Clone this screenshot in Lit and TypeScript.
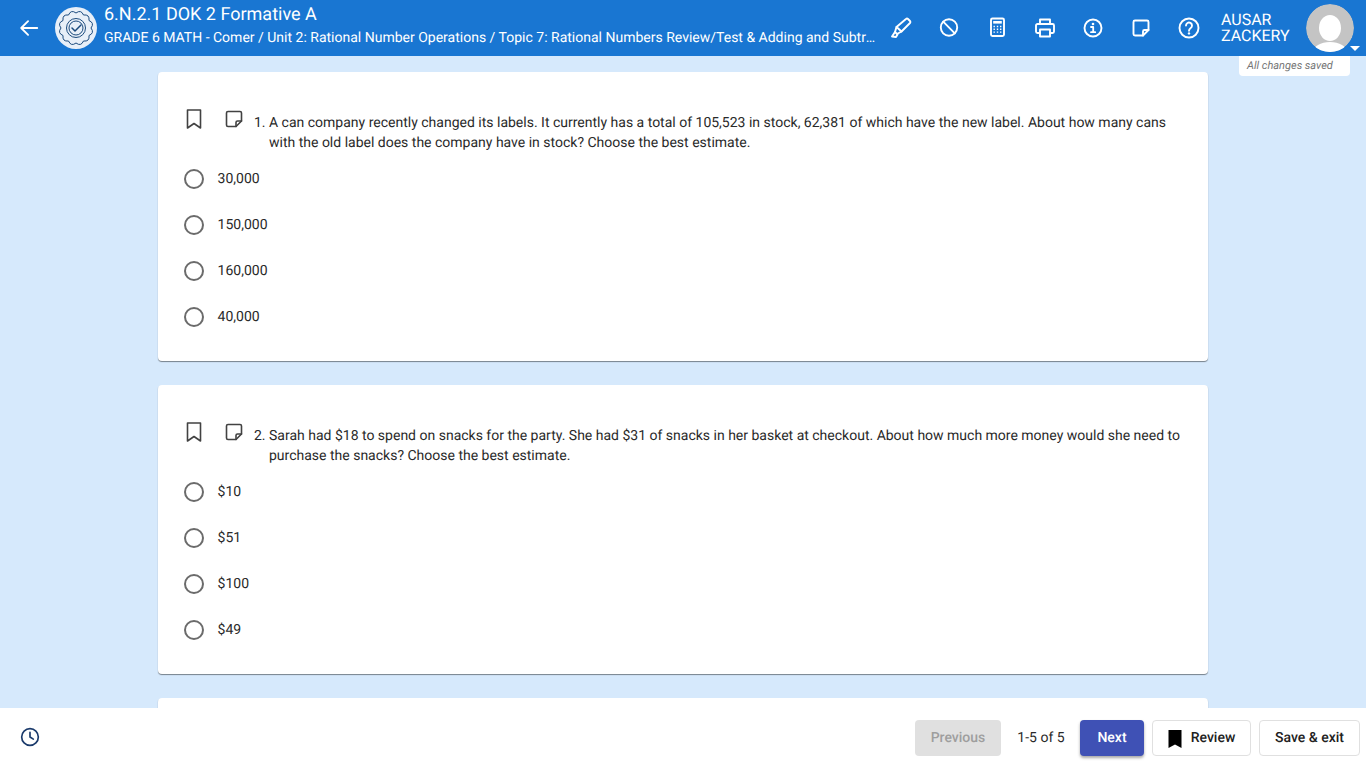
import { LitElement, html, css, svg } from "lit";
import { customElement } from "lit/decorators.js";

const questions = [
  {
    n: "1.",
    text: "A can company recently changed its labels. It currently has a total of 105,523 in stock, 62,381 of which have the new label. About how many cans with the old label does the company have in stock? Choose the best estimate.",
    options: ["30,000", "150,000", "160,000", "40,000"],
  },
  {
    n: "2.",
    text: "Sarah had $18 to spend on snacks for the party. She had $31 of snacks in her basket at checkout. About how much more money would she need to purchase the snacks? Choose the best estimate.",
    options: ["$10", "$51", "$100", "$49"],
  },
];

const note = svg`<path d="M6 4.500h12a1.500 1.500 0 0 1 1.500 1.500v8l-5.500 5.500H6a1.500 1.500 0 0 1-1.500-1.500V6A1.500 1.500 0 0 1 6 4.500z" /><path d="M14 19.500v-4a1.500 1.500 0 0 1 1.500-1.500h4" />`;

const toolIcons = [
  svg`<path d="M17 3a1.500 1.500 0 0 1 2 0l2 2a1.500 1.500 0 0 1 0 2l-8.500 8.500-5-4.500z"/><path d="M7.500 11l-1.500 5 2 2 4.500-2.500"/><path d="M6 16l-3 4.500 4 .5 1.500-2.500"/>`,
  svg`<circle cx="12" cy="11.500" r="8.200"/><path d="M6.200 5.700l11.600 11.600"/>`,
  svg`<rect x="6" y="2.500" width="13" height="17.500" rx="1.500"/><rect x="8.200" y="5" width="8.600" height="2.600" fill="currentColor" stroke="none"/><path d="M8.500 10.500h1.400M11.800 10.500h1.400M15 10.500h1.400M8.500 13.300h1.400M11.800 13.300h1.400M15 13.300h1.400M8.500 16.100h1.400M11.800 16.100h1.400M15 16.100h1.400" stroke-width="1.400" stroke-linecap="butt"/>`,
  svg`<path d="M7 8V3.500h10V8"/><path d="M7 17H4.500a1.500 1.500 0 0 1-1.500-1.500v-6A1.500 1.500 0 0 1 4.500 8h15A1.500 1.500 0 0 1 21 9.500v6a1.500 1.500 0 0 1-1.500 1.500H17"/><rect x="7" y="13.500" width="10" height="7"/>`,
  svg`<circle cx="12" cy="12" r="8.500"/><circle cx="12" cy="8" r="1.300" fill="currentColor" stroke="none"/><path d="M10 11h2.200v5M10 16.200h4.200" stroke-width="1.800"/>`,
  note,
  svg`<circle cx="12" cy="12" r="9.500"/><path d="M9 9.500a3 3 0 1 1 4.700 2.500c-1.100.8-1.700 1.400-1.700 2.700"/><circle cx="12" cy="17.400" r="1.200" fill="currentColor" stroke="none"/>`,
];

@customElement("app-root")
export class AppRoot extends LitElement {
  static styles = css`
    :host {
      display: flex;
      flex-direction: column;
      height: 100vh;
      overflow: hidden;
      font-family: Roboto, "Liberation Sans", sans-serif;
      text-rendering: geometricPrecision;
      background: #d6e9fc;
      color: #2a2a2a;
      position: relative;
    }
    svg.i {
      fill: none;
      stroke: currentColor;
      stroke-width: 2;
      stroke-linecap: round;
      stroke-linejoin: round;
      display: block;
    }
    .header {
      flex: 0 0 56px;
      height: 56px;
      background: #1976d2;
      color: #fff;
      display: flex;
      align-items: center;
      padding: 0 12px 0 18px;
    }
    .back {
      width: 22px;
      height: 22px;
      margin-right: 15px;
    }
    .logo {
      width: 42px;
      height: 42px;
      border-radius: 50%;
      background: #e8eff8;
      margin-right: 7px;
      flex: none;
    }
    .titles {
      width: 772px;
      flex: none;
      align-self: flex-start;
      padding-top: 4px;
    }
    .title {
      font-size: 18px;
      line-height: 21px;
    }
    .sub {
      font-size: 14px;
      line-height: 20px;
      margin-top: 3px;
      white-space: nowrap;
      overflow: hidden;
      text-overflow: ellipsis;
    }
    .tools {
      display: flex;
      gap: 24px;
      margin-left: 13px;
    }
    .tools svg {
      width: 24px;
      height: 24px;
      stroke-width: 1.900;
    }
    .user {
      margin-left: 20px;
      width: 85px;
      font-size: 16px;
      line-height: 16px;
    }
    .avatar {
      width: 48px;
      height: 48px;
      border-radius: 50%;
      position: relative;
      flex: none;
    }
    .avatar svg {
      display: block;
      border-radius: 50%;
    }
    .caret {
      position: absolute;
      right: -6px;
      bottom: 1px;
      width: 0;
      height: 0;
      border-left: 5px solid transparent;
      border-right: 5px solid transparent;
      border-top: 5px solid #fff;
    }
    .saved {
      position: absolute;
      top: 56px;
      left: 1239px;
      width: 111px;
      height: 20px;
      box-sizing: border-box;
      background: #fff;
      border-radius: 0 0 4px 4px;
      font-size: 11px;
      font-style: italic;
      color: #757575;
      line-height: 19px;
      padding-left: 8px;
    }
    .main {
      flex: 1;
      min-height: 0;
      overflow: hidden;
      display: flex;
      flex-direction: column;
      align-items: center;
      gap: 24px;
      padding-top: 16px;
    }
    .card {
      flex: none;
      width: 1050px;
      height: 289px;
      box-sizing: border-box;
      background: #fff;
      border-radius: 4px;
      box-shadow: 0 1px 1px rgba(0, 0, 0, 0.45);
      padding: 41px 24px 0 26px;
    }
    .q {
      display: flex;
      align-items: flex-start;
      font-size: 14px;
      line-height: 20px;
    }
    .q svg {
      flex: none;
      color: #424242;
      stroke-width: 1.600;
    }
    .mark {
      width: 24px;
      height: 24px;
      margin-right: 16px;
      margin-top: -6px;
      margin-left: -2px;
    }
    .qnote {
      width: 24px;
      height: 24px;
      margin-top: -6px;
      margin-right: 8px;
    }
    .num {
      width: 15px;
      flex: none;
    }
    .qtext {
      flex: 1;
    }
    .opts {
      margin-top: 3px;
    }
    .opt {
      height: 46px;
      display: flex;
      align-items: center;
      font-size: 14px;
    }
    .radio {
      width: 20px;
      height: 20px;
      box-sizing: border-box;
      border: 2px solid #6b6b6b;
      border-radius: 50%;
      margin-right: 13.600px;
      flex: none;
    }
    .footer {
      flex: 0 0 60px;
      height: 60px;
      background: #fff;
      display: flex;
      align-items: center;
      padding: 0 6px 0 20px;
      font-size: 14px;
      position: relative;
    }
    .clock {
      width: 20px;
      height: 20px;
      color: #1a3a6b;
      stroke-width: 1.800;
      margin-bottom: 2px;
    }
    .spacer {
      flex: 1;
    }
    .btn {
      height: 36px;
      box-sizing: border-box;
      border-radius: 4px;
      display: flex;
      align-items: center;
      justify-content: center;
      font-size: 14px;
      font-weight: 500;
      padding-bottom: 1px;
    }
    .prev {
      width: 86px;
      background: #e0e0e0;
      color: #9e9e9e;
    }
    .count {
      width: 79px;
      padding-left: 1px;
      box-sizing: border-box;
      text-align: center;
      padding-bottom: 1px;
    }
    .next {
      width: 64px;
      background: #3f51b5;
      color: #fff;
      box-shadow: 0 2px 3px rgba(0, 0, 0, 0.35);
    }
    .review {
      width: 99px;
      margin-left: 8px;
      border: 1px solid #e0e0e0;
      background: #fff;
      color: #212121;
      gap: 9px;
    }
    .review svg {
      width: 14px;
      height: 18px;
      display: block;
      margin-top: 2px;
    }
    .save {
      width: 101px;
      margin-left: 8px;
      border: 1px solid #e0e0e0;
      background: #fff;
      color: #212121;
    }
  `;

  private logo() {
    const n = 12;
    let d = "";
    for (let a = 0; a < n; a++) {
      const t0 = (a / n) * Math.PI * 2;
      const t1 = ((a + 0.5) / n) * Math.PI * 2;
      const t2 = ((a + 1) / n) * Math.PI * 2;
      const p = (t: number, r: number) =>
        `${(21 + r * Math.cos(t)).toFixed(1)} ${(21 + r * Math.sin(t)).toFixed(1)}`;
      if (a === 0) d += `M${p(t0, 15)}`;
      d += `Q${p(t1, 19.5)} ${p(t2, 15)}`;
    }
    return html`<svg class="logo" viewBox="0 0 42 42" fill="none" stroke="#1b4a7d" stroke-width="1" stroke-linejoin="round">
      <path d="${d}Z" />
      <circle cx="21" cy="21" r="9.500" />
      <circle cx="21" cy="21" r="7" />
      <path d="M17 21l3 3 6-6" stroke-width="1.500" stroke-linecap="round" />
    </svg>`;
  }

  render() {
    return html`
      <div class="header">
        <svg class="i back" viewBox="0 0 24 24"><path d="M21 12H4M11 4.500L3.500 12l7.500 7.500" /></svg>
        ${this.logo()}
        <div class="titles">
          <div class="title">6.N.2.1 DOK 2 Formative A</div>
          <div class="sub">GRADE 6 MATH - Comer / Unit 2: Rational Number Operations / Topic 7: Rational Numbers Review/Test &amp; Adding and Subtracting Integers</div>
        </div>
        <div class="tools">
          ${toolIcons.map((p) => html`<svg class="i" viewBox="0 0 24 24">${p}</svg>`)}
        </div>
        <div class="user">AUSAR ZACKERY</div>
        <div class="avatar">
          <svg width="48" height="48" viewBox="0 0 48 48">
            <circle cx="24" cy="24" r="24" fill="#c4c4c4" />
            <ellipse cx="24" cy="24" rx="11" ry="13" fill="#fff" />
            <ellipse cx="24" cy="48" rx="17" ry="10" fill="#fff" />
          </svg>
          <div class="caret"></div>
        </div>
      </div>
      <div class="saved">All changes saved</div>
      <div class="main">
        ${questions.map(
          (q) => html`<div class="card">
            <div class="q">
              <svg class="i mark" viewBox="0 0 24 24"><path d="M5.500 3h13v18l-6.500-4.500L5.500 21z" /></svg>
              <svg class="i qnote" viewBox="0 0 24 24">${note}</svg>
              <span class="num">${q.n}</span>
              <span class="qtext">${q.text}</span>
            </div>
            <div class="opts">
              ${q.options.map((o) => html`<div class="opt"><span class="radio"></span>${o}</div>`)}
            </div>
          </div>`
        )}
        <div class="card"></div>
      </div>
      <div class="footer">
        <svg class="i clock" viewBox="0 0 24 24"><circle cx="12" cy="12" r="10" /><path d="M12 6.500V12l4 2.500" /></svg>
        <div class="spacer"></div>
        <div class="btn prev">Previous</div>
        <div class="count">1-5 of 5</div>
        <div class="btn next">Next</div>
        <div class="btn review">
          <svg viewBox="0 0 14 18"><path d="M0.500 0h13v18L7 14.500 0.500 18z" fill="#000" /></svg>
          Review
        </div>
        <div class="btn save">Save &amp; exit</div>
      </div>
    `;
  }
}
